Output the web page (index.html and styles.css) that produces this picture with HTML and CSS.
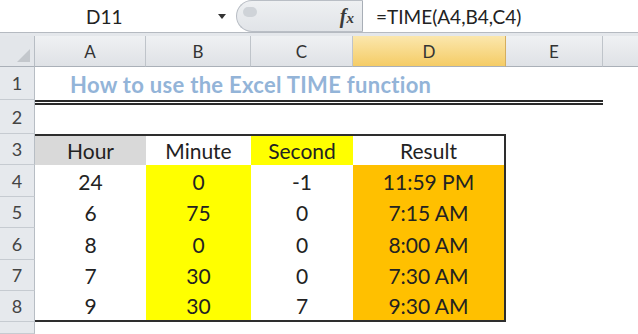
FILE: index.html
```html
<!DOCTYPE html>
<html lang="en">
<head>
  <meta charset="UTF-8">
  <meta name="viewport" content="width=device-width, initial-scale=1.0">
  <title>Excel TIME function</title>
  <link rel="stylesheet" href="styles.css">
</head>
<body>
  <div class="formula-bar">
    <div class="name-box">
      <span class="name">D11</span>
      <span class="arrow"></span>
    </div>
    <div class="fx-box">
      <span class="grip"></span>
      <span class="fx">f<span class="x">x</span></span>
    </div>
    <div class="formula">=TIME(A4,B4,C4)</div>
  </div>
  <div class="band"></div>

  <div class="sheet">
    <!-- column headers -->
    <div class="corner"><span class="tri"></span></div>
    <div class="col-head">A</div>
    <div class="col-head">B</div>
    <div class="col-head">C</div>
    <div class="col-head selected">D</div>
    <div class="col-head">E</div>
    <div class="col-head last"></div>

    <!-- row 1 -->
    <div class="row-head">1</div>
    <div class="title">How to use the Excel TIME function</div>
    <div class="cell"></div>

    <!-- row 2 -->
    <div class="row-head">2</div>
    <div class="underline"></div>
    <div class="cell"></div>

    <!-- row 3 -->
    <div class="row-head">3</div>
    <div class="cell top gray">Hour</div>
    <div class="cell top">Minute</div>
    <div class="cell top yellow">Second</div>
    <div class="cell top right">Result</div>
    <div class="cell"></div>
    <div class="cell"></div>

    <!-- row 4 -->
    <div class="row-head">4</div>
    <div class="cell">24</div>
    <div class="cell yellow">0</div>
    <div class="cell">-1</div>
    <div class="cell right orange">11:59 PM</div>
    <div class="cell"></div>
    <div class="cell"></div>

    <!-- row 5 -->
    <div class="row-head">5</div>
    <div class="cell">6</div>
    <div class="cell yellow">75</div>
    <div class="cell">0</div>
    <div class="cell right orange">7:15 AM</div>
    <div class="cell"></div>
    <div class="cell"></div>

    <!-- row 6 -->
    <div class="row-head">6</div>
    <div class="cell">8</div>
    <div class="cell yellow">0</div>
    <div class="cell">0</div>
    <div class="cell right orange">8:00 AM</div>
    <div class="cell"></div>
    <div class="cell"></div>

    <!-- row 7 -->
    <div class="row-head">7</div>
    <div class="cell">7</div>
    <div class="cell yellow">30</div>
    <div class="cell">0</div>
    <div class="cell right orange">7:30 AM</div>
    <div class="cell"></div>
    <div class="cell"></div>

    <!-- row 8 -->
    <div class="row-head">8</div>
    <div class="cell bottom">9</div>
    <div class="cell bottom yellow">30</div>
    <div class="cell bottom">7</div>
    <div class="cell bottom right orange">9:30 AM</div>
    <div class="cell"></div>
    <div class="cell"></div>

    <!-- row 9 (cut off) -->
    <div class="row-head"></div>
  </div>
</body>
</html>
```

FILE: styles.css
```css
body {
  margin: 0;
  width: 638px;
  height: 334px;
  overflow: hidden;
  background: #fff;
  font-family: Lato, "Open Sans", sans-serif;
  color: #222;
}
.formula-bar {
  display: flex;
  height: 32px;
  background: #fff;
  border-bottom: 1px solid #b5bac1;
}
.name-box {
  width: 236px;
  display: flex;
  align-items: center;
  padding-left: 86px;
  box-sizing: border-box;
  font-size: 19px;
  color: #222;
}
.name-box .arrow {
  margin-left: auto;
  margin-right: 10px;
  width: 0;
  height: 0;
  border-left: 4px solid transparent;
  border-right: 4px solid transparent;
  border-top: 5px solid #333;
}
.fx-box {
  width: 127px;
  display: flex;
  align-items: center;
  background: linear-gradient(#eef0f2, #e1e4e8);
  border: 1px solid #b9bec5;
  border-right: 1px solid #a8aeb6;
  border-radius: 16px 0 0 16px;
  box-sizing: border-box;
}
.grip {
  width: 14px;
  height: 10px;
  margin: -8px 0 0 6px;
  border-radius: 6px;
  background: #cfd3d8;
}
.fx {
  margin-left: auto;
  margin-right: 8px;
  font-family: "Liberation Serif", serif;
  font-style: italic;
  font-weight: bold;
  font-size: 20px;
  color: #3a3a3a;
}
.fx .x {
  font-size: 15px;
}
.formula {
  flex: 1;
  display: flex;
  align-items: center;
  padding-left: 13px;
  font-size: 19px;
  color: #222;
}
.band {
  height: 3px;
  background: #e4e7eb;
}
.sheet {
  display: grid;
  grid-template-columns: 35px 111px 105px 102px 153px 97px 1fr;
  grid-template-rows: 31px 33px 34px 31px 32px 31px 32px 31px 31px 12px;
}
.corner {
  background: #e3e6ea;
  border-right: 1px solid #b7bdc4;
  border-bottom: 1px solid #aab0b8;
  position: relative;
}
.corner .tri {
  position: absolute;
  right: 4px;
  bottom: 4px;
  width: 0;
  height: 0;
  border-left: 13px solid transparent;
  border-bottom: 13px solid #c3c7cc;
}
.col-head {
  display: flex;
  align-items: center;
  justify-content: center;
  font-size: 17px;
  color: #333;
  background: linear-gradient(#eff1f3, #dfe2e6);
  border-right: 1px solid #bfc4ca;
  border-bottom: 1px solid #aab0b8;
}
.col-head.selected {
  background: linear-gradient(#fbe7ad, #f5cc66);
  border-right-color: #d5ae5e;
}
.col-head.last {
  border-right: none;
}
.row-head {
  grid-column: 1;
  display: flex;
  align-items: center;
  justify-content: center;
  font-size: 18px;
  color: #444;
  background: #e6e9ed;
  border-right: 1px solid #b7bdc4;
  border-bottom: 1px solid #c6cbd1;
}
.title {
  grid-column: 2 / 7;
  display: flex;
  align-items: center;
  padding: 2px 0 0 35px;
  font-size: 22px;
  font-weight: bold;
  letter-spacing: 0.3px;
  color: #93b4d8;
}
.underline {
  grid-column: 2 / 7;
  border-top: 5px double #2a2a2a;
}
.cell {
  display: flex;
  align-items: center;
  justify-content: center;
  font-size: 21px;
  color: #222;
  background: #fff;
}
.cell.top {
  border-top: 2px solid #2e2e2e;
}
.cell.bottom {
  border-bottom: 2px solid #2e2e2e;
}
.cell.right {
  border-right: 2px solid #2e2e2e;
}
.cell.gray {
  background: #d9d9d9;
}
.cell.yellow {
  background: #ffff00;
}
.cell.orange {
  background: #ffc000;
}
```
